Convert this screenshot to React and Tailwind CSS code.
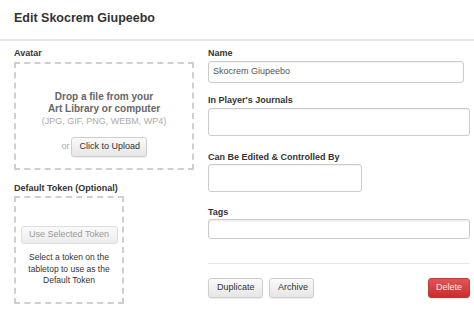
import React from 'react';

const Label = ({ children, className = '' }) => (
  <div className={`text-[9px] leading-[11px] font-bold text-[#333] ${className}`}>{children}</div>
);

const Field = ({ className = '', children }) => (
  <div
    className={`bg-white border border-[#cccccc] rounded-[3px] shadow-[inset_0_1px_1px_rgba(0,0,0,0.06)] flex items-center px-[4px] ${className}`}
  >
    {children}
  </div>
);

const Btn = ({ children, className = '' }) => (
  <button
    className={`shrink-0 whitespace-nowrap h-[20px] px-[8px] text-[9px] text-[#333] rounded-[3px] border border-[#cfcfcf] bg-gradient-to-b from-[#fafafa] to-[#e6e6e6] shadow-[0_1px_1px_rgba(0,0,0,0.08)] ${className}`}
  >
    {children}
  </button>
);

export default function App() {
  return (
    <div
      className="w-[474px] h-[324px] bg-white overflow-hidden"
      style={{ fontFamily: '"Liberation Sans", Arial, sans-serif' }}
    >
      {/* HEADER */}
      <div className="h-[41px] flex items-center px-[14px] border-b-2 border-[#e6e6e6]">
        <h1 className="text-[12.5px] font-bold text-[#333] -mt-[2px]">Edit Skocrem Giupeebo</h1>
      </div>

      <div className="flex px-[14px] pt-[7px] gap-[14px]">
        {/* LEFT COLUMN */}
        <div className="w-[180px] flex flex-col">
          <Label>Avatar</Label>
          <div className="mt-[3px] w-[180px] h-[108px] border-2 border-dashed border-[#cfcfcf] flex flex-col items-center pt-[27px]">
            <div className="text-[10px] leading-[12px] font-bold text-[#666] text-center">
              Drop a file from your
              <br />
              Art Library or computer
            </div>
            <div className="text-[9px] leading-[10px] text-[#aaa] text-center mt-[1px]">
              (JPG, GIF, PNG, WEBM, WP4)
            </div>
            <div className="flex items-center mt-[11px] whitespace-nowrap">
              <span className="text-[9px] text-[#aaa] mr-[1px]">or</span>
              <Btn className="w-[76px] px-0">Click to Upload</Btn>
            </div>
          </div>

          <Label className="mt-[13px]">Default Token (Optional)</Label>
          <div className="mt-[2px] w-[110px] h-[108px] border-2 border-dashed border-[#cfcfcf] flex flex-col items-center pt-[28px]">
            <button className="shrink-0 whitespace-nowrap w-[97px] h-[18px] text-[9px] text-[#9a9a9a] rounded-[3px] border border-[#dedede] bg-gradient-to-b from-[#fafafa] to-[#ececec]">
              Use Selected Token
            </button>
            <div className="mt-[8px] text-[8.5px] leading-[11.5px] text-[#333] text-center">
              Select a token on the
              <br />
              tabletop to use as the
              <br />
              Default Token
            </div>
          </div>
        </div>

        {/* RIGHT COLUMN */}
        <div className="w-[262px] flex flex-col">
          <Label>Name</Label>
          <Field className="mt-[2px] w-[256px] h-[22px]">
            <span className="text-[9px] text-[#555]">Skocrem Giupeebo</span>
          </Field>

          <Label className="mt-[12px]">In Player's Journals</Label>
          <Field className="mt-[2px] w-[262px] h-[28px]" />

          <Label className="mt-[16px]">Can Be Edited &amp; Controlled By</Label>
          <Field className="mt-[1px] w-[154px] h-[28px]" />

          <Label className="mt-[15px]">Tags</Label>
          <Field className="mt-[1px] w-[262px] h-[20px] border-[#b8b8b8] shadow-[inset_0_1px_2px_rgba(0,0,0,0.1)]" />

          <div className="mt-[24px] border-t border-[#e6e6e6]" />

          <div className="mt-[14px] flex items-center">
            <Btn className="w-[55px] px-0">Duplicate</Btn>
            <Btn className="ml-[6px] w-[45px] px-0">Archive</Btn>
            <button className="ml-auto w-[42px] h-[20px] text-[9px] text-[#fde8e8] rounded-[3px] border border-[#c23a3a] bg-gradient-to-b from-[#e25454] to-[#c92c2c] shadow-[0_1px_1px_rgba(0,0,0,0.1)]">
              Delete
            </button>
          </div>
        </div>
      </div>
    </div>
  );
}
